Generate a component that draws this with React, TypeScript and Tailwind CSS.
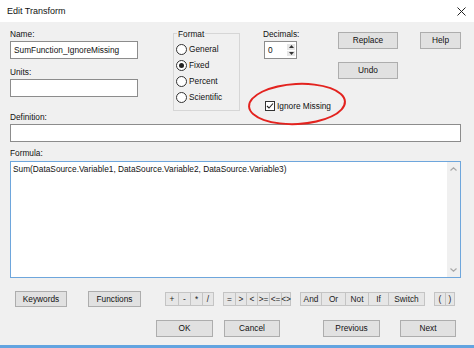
import React from "react";

const font = { fontFamily: '"Liberation Sans", Arial, sans-serif' };

const Btn = ({ label, className = "" }: { label: string; className?: string }) => (
  <div
    className={`flex items-center justify-center border border-[#adadad] bg-[#e1e1e1] text-[8.3px] leading-none text-[#111] ${className}`}
  >
    {label}
  </div>
);

const OpGroup = ({ items, className = "" }: { items: { t: string; w: string }[]; className?: string }) => (
  <div className={`flex h-[14px] border border-[#c4c4c4] bg-[#e6e6e6] ${className}`}>
    {items.map((it, i) => (
      <div
        key={i}
        className={`flex items-center justify-center text-[8.3px] leading-none text-[#222] ${it.w} ${
          i > 0 ? "border-l border-[#c4c4c4]" : ""
        }`}
      >
        {it.t}
      </div>
    ))}
  </div>
);

const Radio = ({ label, checked = false }: { label: string; checked?: boolean }) => (
  <div className="flex h-[16px] items-center">
    <div className="flex h-[11px] w-[11px] items-center justify-center rounded-full border border-[#333] bg-white">
      {checked && <div className="h-[5px] w-[5px] rounded-full bg-[#222]" />}
    </div>
    <span className="ml-[2px] text-[8.3px] leading-none">{label}</span>
  </div>
);

export default function App() {
  return (
    <div className="flex h-[348px] w-[474px] flex-col bg-[#f0f0f0] text-[#111]" style={font}>
      {/* title bar */}
      <div className="flex h-[22px] items-center justify-between bg-white pl-[7px] pr-[8px]">
        <span className="text-[9px] leading-none">Edit Transform</span>
        <svg width="9" height="9" viewBox="0 0 9 9" className="mt-[1px]">
          <path d="M0.5 0.5 L8.5 8.5 M8.5 0.5 L0.5 8.5" stroke="#222" strokeWidth="1" />
        </svg>
      </div>

      <div className="relative flex flex-col">
        {/* top section */}
        <div className="flex h-[89px] items-start pl-[10px]">
          <div className="flex w-[128px] flex-col pt-[6px]">
            <div className="h-[13px] text-[8.3px] leading-[13px]">Name:</div>
            <div className="flex h-[18px] items-center border border-[#8c8c8c] bg-white pl-[3px] text-[8.3px] leading-none">
              SumFunction_IgnoreMissing
            </div>
            <div className="mt-[7px] h-[13px] text-[8.3px] leading-[13px]">Units:</div>
            <div className="h-[18px] border border-[#8c8c8c] bg-white" />
          </div>

          <div className="relative ml-[35px] mt-[11px] flex h-[78px] w-[67px] flex-col border border-[#d6d6d6] pl-[2px] pt-[7px]">
            <span className="absolute left-[3px] top-[-4px] bg-[#f0f0f0] px-[1px] text-[8.3px] leading-none">
              Format
            </span>
            <Radio label="General" />
            <Radio label="Fixed" checked />
            <Radio label="Percent" />
            <Radio label="Scientific" />
          </div>

          <div className="ml-[23px] flex w-[75px] flex-col pt-[6px]">
            <div className="h-[13px] text-[8.3px] leading-[13px]">Decimals:</div>
            <div className="ml-[1px] flex h-[18px] w-[33px] border border-[#8c8c8c] bg-white">
              <span className="flex-1 pl-[3px] pt-[4px] text-[8.3px] leading-none">0</span>
              <div className="my-[2px] mr-[1px] flex w-[8px] flex-col gap-[1px]">
                <div className="flex flex-1 items-center justify-center bg-[#e6e6e6]">
                  <svg width="5" height="3" viewBox="0 0 5 3">
                    <path d="M0 3 L2.5 0 L5 3 Z" fill="#333" />
                  </svg>
                </div>
                <div className="flex flex-1 items-center justify-center bg-[#e6e6e6]">
                  <svg width="5" height="3" viewBox="0 0 5 3">
                    <path d="M0 0 L2.5 3 L5 0 Z" fill="#333" />
                  </svg>
                </div>
              </div>
            </div>
            <div className="ml-[2px] mt-[41px] flex h-[12px] items-center">
              <div className="flex h-[10px] w-[10px] items-center justify-center border border-[#333] bg-white">
                <svg width="8" height="8" viewBox="0 0 8 8">
                  <path d="M1 4 L3 6 L7 1.5" stroke="#222" strokeWidth="1.1" fill="none" />
                </svg>
              </div>
              <span className="ml-[2px] text-[8.3px] leading-none">Ignore Missing</span>
            </div>
          </div>

          <div className="mt-[10px] flex w-[60px] flex-col">
            <Btn label="Replace" className="h-[17px]" />
            <Btn label="Undo" className="mt-[13px] h-[17px]" />
          </div>

          <Btn label="Help" className="ml-[22px] mt-[10px] h-[17px] w-[41px]" />
        </div>

        {/* red annotation */}
        <div className="absolute left-[248px] top-[61px] h-[42px] w-[98px] -rotate-3 rounded-[50%] border-[2.5px] border-[#e3231f]" />

        {/* definition */}
        <div className="flex flex-col px-[10px]">
          <div className="h-[13px] text-[8.3px] leading-[13px]">Definition:</div>
          <div className="h-[18px] w-[451px] border border-[#8c8c8c] bg-white" />
          <div className="mt-[5px] h-[13px] text-[8.3px] leading-[13px]">Formula:</div>
          <div className="mt-[1px] flex h-[117px] w-[451px] border border-[#6ea6dc] bg-white">
            <div className="flex-1 pl-[2px] pt-[2px] text-[8.3px] leading-[10px]">
              Sum(DataSource.Variable1, DataSource.Variable2, DataSource.Variable3)
            </div>
            <div className="flex w-[13px] flex-col items-center justify-between bg-[#f0f0f0] py-[5px]">
              <svg width="7" height="4" viewBox="0 0 7 4">
                <path d="M0.5 3.5 L3.5 0.8 L6.5 3.5" stroke="#a8a8a8" strokeWidth="1.2" fill="none" />
              </svg>
              <svg width="7" height="4" viewBox="0 0 7 4">
                <path d="M0.5 0.5 L3.5 3.2 L6.5 0.5" stroke="#a8a8a8" strokeWidth="1.2" fill="none" />
              </svg>
            </div>
          </div>
        </div>

        {/* operator row */}
        <div className="mt-[13px] flex h-[16px] items-center pl-[15px]">
          <Btn label="Keywords" className="h-[16px] w-[52px]" />
          <Btn label="Functions" className="ml-[21px] h-[16px] w-[53px]" />
          <OpGroup
            className="ml-[24px]"
            items={[
              { t: "+", w: "w-[12px]" },
              { t: "-", w: "w-[12px]" },
              { t: "*", w: "w-[12px]" },
              { t: "/", w: "w-[11px]" },
            ]}
          />
          <OpGroup
            className="ml-[9px]"
            items={[
              { t: "=", w: "w-[11px]" },
              { t: ">", w: "w-[11px]" },
              { t: "<", w: "w-[11px]" },
              { t: ">=", w: "w-[12px]" },
              { t: "<=", w: "w-[12px]" },
              { t: "<>", w: "w-[9px]" },
            ]}
          />
          <OpGroup
            className="ml-[9px]"
            items={[
              { t: "And", w: "w-[20px]" },
              { t: "Or", w: "w-[24px]" },
              { t: "Not", w: "w-[23px]" },
              { t: "If", w: "w-[20px]" },
              { t: "Switch", w: "w-[36px]" },
            ]}
          />
          <OpGroup
            className="ml-[9px]"
            items={[
              { t: "(", w: "w-[10px]" },
              { t: ")", w: "w-[9px]" },
            ]}
          />
        </div>

        {/* bottom buttons */}
        <div className="mt-[13px] flex h-[17px] pl-[156px]">
          <Btn label="OK" className="h-[17px] w-[57px] border-[#0078d7]" />
          <Btn label="Cancel" className="ml-[11px] h-[17px] w-[56px]" />
          <Btn label="Previous" className="ml-[43px] h-[17px] w-[57px]" />
          <Btn label="Next" className="ml-[20px] h-[17px] w-[56px]" />
        </div>

        <div className="mt-[8px] h-[3px] bg-[#63a4e0]" />
      </div>
    </div>
  );
}
